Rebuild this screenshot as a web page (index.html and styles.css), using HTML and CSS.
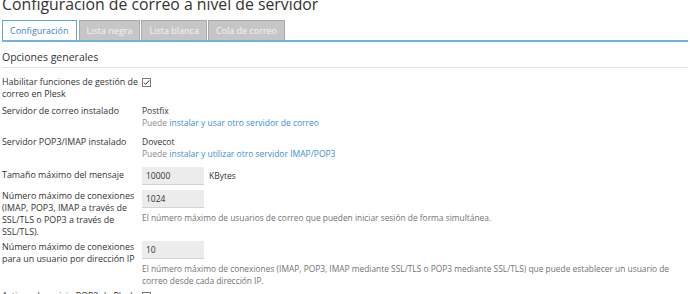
FILE: index.html
```html
<!DOCTYPE html>
<html lang="es">
<head>
    <meta charset="UTF-8">
    <title>Configuración de correo a nivel de servidor</title>
    <link rel="stylesheet" href="styles.css">
</head>
<body>
    <div class="page">
        <h1 class="page-title">Configuración de correo a nivel de servidor</h1>

        <ul class="tabs">
            <li class="tab active">Configuración</li>
            <li class="tab">Lista negra</li>
            <li class="tab">Lista blanca</li>
            <li class="tab">Cola de correo</li>
        </ul>

        <h2 class="section-title">Opciones generales</h2>

        <div class="form">
            <div class="form-row">
                <div class="form-label">Habilitar funciones de gestión de correo en Plesk</div>
                <div class="form-field">
                    <span class="checkbox">
                        <svg width="7" height="7" viewBox="0 0 7 7"><path d="M0.8 3.6 L2.7 5.4 L6.2 1.4" fill="none" stroke="#333" stroke-width="1"/></svg>
                    </span>
                </div>
            </div>

            <div class="form-row with-hint">
                <div class="form-label">Servidor de correo instalado</div>
                <div class="form-field">
                    <div class="value">Postfix</div>
                    <div class="hint">Puede <a href="#">instalar y usar otro servidor de correo</a></div>
                </div>
            </div>

            <div class="form-row with-hint">
                <div class="form-label">Servidor POP3/IMAP instalado</div>
                <div class="form-field">
                    <div class="value">Dovecot</div>
                    <div class="hint">Puede <a href="#">instalar y utilizar otro servidor IMAP/POP3</a></div>
                </div>
            </div>

            <div class="form-row">
                <div class="form-label centered">Tamaño máximo del mensaje</div>
                <div class="form-field inline">
                    <span class="input">10000</span>
                    <span class="unit">KBytes</span>
                </div>
            </div>

            <div class="form-row with-help">
                <div class="form-label">Número máximo de conexiones (IMAP, POP3, IMAP a través de SSL/TLS o POP3 a través de SSL/TLS).</div>
                <div class="form-field">
                    <span class="input">1024</span>
                    <div class="help">El número máximo de usuarios de correo que pueden iniciar sesión de forma simultánea.</div>
                </div>
            </div>

            <div class="form-row with-help">
                <div class="form-label">Número máximo de conexiones para un usuario por dirección IP</div>
                <div class="form-field">
                    <span class="input">10</span>
                    <div class="help">El número máximo de conexiones (IMAP, POP3, IMAP mediante SSL/TLS o POP3 mediante SSL/TLS) que puede establecer un usuario de correo desde cada dirección IP.</div>
                </div>
            </div>

            <div class="form-row">
                <div class="form-label">Activar el servicio POP3 de Plesk</div>
                <div class="form-field">
                    <span class="checkbox"></span>
                </div>
            </div>
        </div>
    </div>
</body>
</html>
```

FILE: styles.css
```css
* {
    margin: 0;
    padding: 0;
    box-sizing: border-box;
}

body {
    font-family: 'Open Sans', sans-serif;
    font-size: 9px;
    color: #333333;
    background: #ffffff;
    overflow: hidden;
}

.page {
    padding: 0 2px;
}

.page-title {
    font-size: 15.8px;
    font-weight: 400;
    line-height: 20px;
    margin-top: -6px;
    color: #333333;
}

.tabs {
    list-style: none;
    display: flex;
    gap: 1px;
    margin-top: 6px;
    border-bottom: 2px solid #72b2dc;
}

.tab {
    padding: 4px 7px 3px;
    font-size: 9px;
    line-height: 12px;
    background: #c6c6c6;
    border: 1px solid #a9a9a9;
    border-bottom: none;
    color: #f4f4f4;
}

.tab.active {
    background: #ffffff;
    border-color: #5ea8da;
    color: #3d86c4;
    margin-right: 1px;
}

.section-title {
    font-size: 10.5px;
    font-weight: 400;
    line-height: 14px;
    margin-top: 8px;
    padding-bottom: 3px;
    border-bottom: 1px solid #e4e4e4;
}

.form {
    margin-top: 8px;
}

.form-row {
    display: flex;
    margin-bottom: 5px;
}

.form-row.with-hint {
    margin-bottom: 7px;
}

.form-row.with-help {
    margin-bottom: 3px;
}

.form-label {
    width: 140px;
    flex-shrink: 0;
    font-size: 8.9px;
    line-height: 12px;
}

.form-label.centered {
    padding-top: 2px;
}

.form-field {
    flex: 1;
    padding-right: 8px;
    font-size: 8.5px;
    line-height: 12px;
}

.form-field.inline {
    display: flex;
    align-items: center;
    gap: 5px;
}

.value {
    color: #333333;
}

.hint {
    color: #8c8c8c;
}

.hint a {
    color: #3b8fcf;
    text-decoration: none;
}

.checkbox {
    display: flex;
    align-items: center;
    justify-content: center;
    width: 9px;
    height: 9px;
    margin-top: 2px;
    border: 1px solid #7a7a7a;
    background: #ffffff;
}

.input {
    display: block;
    width: 62px;
    height: 18px;
    line-height: 18px;
    padding-left: 4px;
    background: #ececec;
    border-bottom: 1px solid #d2d2d2;
    color: #333333;
}

.help {
    color: #737373;
    font-size: 8.4px;
    margin-top: 4px;
    line-height: 12px;
}
```
